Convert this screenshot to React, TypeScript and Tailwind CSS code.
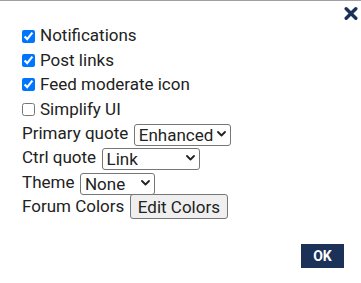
import React from "react";

function Chevron() {
  return (
    <svg
      className="pointer-events-none absolute right-[5px] top-1/2 -translate-y-1/2"
      width="9"
      height="6"
      viewBox="0 0 9 6"
    >
      <path d="M1 1 L4.5 4.5 L8 1" fill="none" stroke="#222" strokeWidth="1.8" strokeLinecap="round" strokeLinejoin="round" />
    </svg>
  );
}

function Select({ value, options, w }: { value: string; options: string[]; w: string }) {
  return (
    <div className={`relative ${w} h-[22px]`}>
      <select
        defaultValue={value}
        className="appearance-none w-full h-full border border-[#767676] rounded-[3px] bg-white pl-[4px] pr-[14px] text-[17px] leading-[20px] text-[#222] outline-none"
      >
        {options.map((o) => (
          <option key={o} value={o}>
            {o}
          </option>
        ))}
      </select>
      <Chevron />
    </div>
  );
}

function CheckRow({ label, checked }: { label: string; checked: boolean }) {
  return (
    <label className="flex items-center h-[24.4px] gap-[5px]">
      <input type="checkbox" defaultChecked={checked} className="w-[13px] h-[13px] m-0" />
      <span>{label}</span>
    </label>
  );
}

export default function App() {
  return (
    <div
      className="relative w-[361px] h-[283px] bg-white border-t border-[#a0a0a0] text-[#222] text-[17px]"
      style={{ fontFamily: "Roboto, 'Liberation Sans', sans-serif" }}
    >
      <div className="flex justify-end pt-[6px] pr-[3px]">
        <svg width="14" height="13" viewBox="0 0 14 13">
          <path d="M2.2 1.8 L11.8 11.2 M11.8 1.8 L2.2 11.2" stroke="#1b3158" strokeWidth="3.4" strokeLinecap="round" />
        </svg>
      </div>
      <div className="flex flex-col pl-[22px] pt-[4px]">
        <CheckRow label="Notifications" checked />
        <CheckRow label="Post links" checked />
        <CheckRow label="Feed moderate icon" checked />
        <CheckRow label="Simplify UI" checked={false} />
        <div className="flex items-center h-[24.4px] gap-[5.5px]">
          <span>Primary quote</span>
          <Select value="Enhanced" options={["Enhanced", "Simple"]} w="w-[97px]" />
        </div>
        <div className="flex items-center h-[24.4px] gap-[5.5px]">
          <span>Ctrl quote</span>
          <Select value="Link" options={["Link", "Enhanced", "Simple"]} w="w-[98px]" />
        </div>
        <div className="flex items-center h-[24.4px] gap-[5.5px]">
          <span>Theme</span>
          <Select value="None" options={["None", "Dark"]} w="w-[75px]" />
        </div>
        <div className="flex items-center h-[24.4px] gap-[5.5px]">
          <span>Forum Colors</span>
          <button className="h-[25px] px-[7px] border border-[#767676] rounded-[3px] bg-[#efefef] text-[17px] leading-[20px]">
            Edit Colors
          </button>
        </div>
      </div>
      <div className="flex justify-end pr-[17px] pt-[25px]">
        <button className="w-[43px] h-[24px] bg-[#1b3158] text-white text-[14px] font-bold leading-[24px]">
          OK
        </button>
      </div>
    </div>
  );
}
